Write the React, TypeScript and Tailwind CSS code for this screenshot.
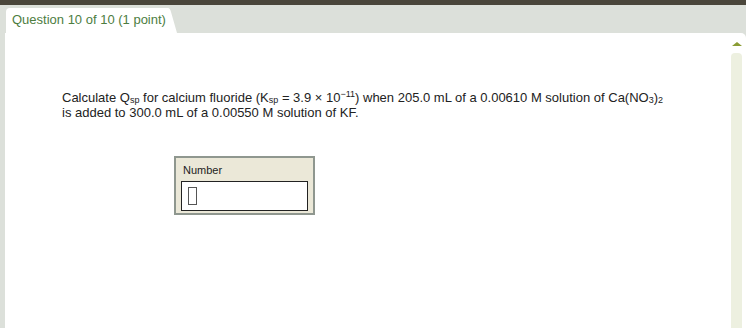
import React from "react";

const Sub = ({ children }: { children: React.ReactNode }) => (
  <sub className="text-[9px] leading-none align-baseline bottom-[-1px]">{children}</sub>
);

export default function App() {
  return (
    <div
      className="w-[746px] h-[328px] overflow-hidden bg-[#dce0da] flex flex-col"
      style={{ fontFamily: '"Liberation Sans", Arial, sans-serif' }}
    >
      <div className="h-[5px] bg-[#4a463b] shrink-0" />
      {/* header band with tab */}
      <div className="h-[28px] shrink-0 flex items-end pl-[6px]">
        <div className="h-[25px] flex items-stretch">
          <div className="bg-white rounded-tl-[4px] pl-[6px] pr-[1px] pt-[4px] text-[13px] leading-[15px] text-[#4d7d3f] whitespace-nowrap">
            Question 10 of 10 (1 point)
          </div>
          <svg width="11" height="25" viewBox="0 0 11 25" className="block">
            <path d="M0 0 L1 0 Q3 0 4 4 L10 25 L0 25 Z" fill="#ffffff" />
          </svg>
        </div>
      </div>
      {/* body */}
      <div className="flex-1 flex pl-[5px]">
        <div className="flex-1 bg-white rounded-tr-[5px] flex">
          <div className="flex-1 pl-[57px] pt-[57px] text-[#222]">
            <p className="text-[13px] leading-[15px] whitespace-nowrap">
              Calculate Q<Sub>sp</Sub> for calcium fluoride (K<Sub>sp</Sub> = 3.9 × 10
              <sup className="text-[9px] leading-none align-baseline top-[-5px]">−11</sup>) when 205.0 mL of a
              0.00610 M solution of Ca(NO<Sub>3</Sub>)<Sub>2</Sub>
              <br />
              is added to 300.0 mL of a 0.00550 M solution of KF.
            </p>
            <div className="mt-[36px] ml-[112px] w-[141px] h-[59px] border-2 border-[#8f978f] bg-[#ebe8d8] px-[5px] pt-[6px] pb-[2px] flex flex-col">
              <div className="text-[11px] leading-[13px] text-[#222] ml-[2px]">Number</div>
              <div className="mt-[4px] h-[30px] border border-[#222] bg-white pl-[6px] pt-[5px]">
                <div className="w-[9px] h-[18px] border border-[#555]" />
              </div>
            </div>
          </div>
          {/* scrollbar */}
          <div className="w-[15px] flex flex-col items-start pt-[9px]">
            <svg width="10" height="4" viewBox="0 0 10 4" className="block ml-[1px]">
              <path d="M5 0 L10 4 L0 4 Z" fill="#8a9c34" />
            </svg>
            <div className="mt-[7px] w-[11px] flex-1 bg-[#edf0e0] rounded-t-[4px]" />
          </div>
        </div>
      </div>
    </div>
  );
}
